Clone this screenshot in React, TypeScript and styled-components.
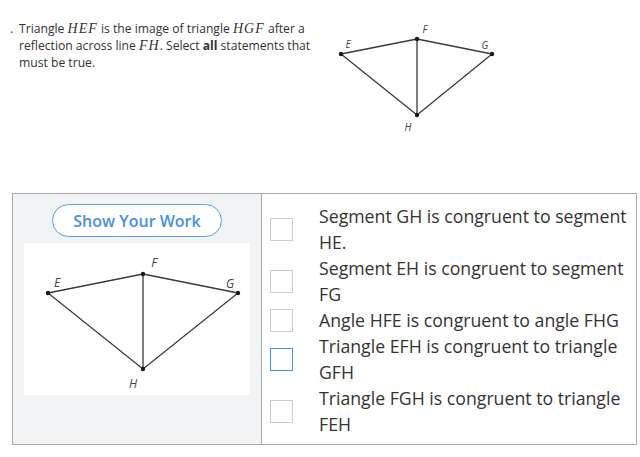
import React from "react";
import styled, { createGlobalStyle } from "styled-components";

const GlobalStyle = createGlobalStyle`
  html, body {
    margin: 0;
    padding: 0;
    background: #ffffff;
  }
  body {
    font-family: "Open Sans", "Liberation Sans", sans-serif;
    color: #333333;
  }
`;

interface Point {
  x: number;
  y: number;
}

interface FigureProps {
  width: number;
  height: number;
  pts: { E: Point; F: Point; G: Point; H: Point };
  labels: { E: Point; F: Point; G: Point; H: Point };
  fontSize: number;
}

const Kite: React.FC<FigureProps> = ({ width, height, pts, labels, fontSize }) => {
  const { E, F, G, H } = pts;
  return (
    <svg width={width} height={height} viewBox={`0 0 ${width} ${height}`}>
      <g stroke="#3a3a3a" strokeWidth={1.3} fill="none">
        <line x1={E.x} y1={E.y} x2={F.x} y2={F.y} />
        <line x1={F.x} y1={F.y} x2={G.x} y2={G.y} />
        <line x1={G.x} y1={G.y} x2={H.x} y2={H.y} />
        <line x1={H.x} y1={H.y} x2={E.x} y2={E.y} />
        <line x1={F.x} y1={F.y} x2={H.x} y2={H.y} />
      </g>
      <g fill="#1a1a1a">
        {[E, F, G, H].map((p, i) => (
          <circle key={i} cx={p.x} cy={p.y} r={2.2} />
        ))}
      </g>
      <g
        fill="#444"
        fontFamily="'Open Sans', 'Liberation Sans', sans-serif"
        fontStyle="italic"
        fontSize={fontSize}
      >
        {(["E", "F", "G", "H"] as const).map((k) => (
          <text key={k} x={labels[k].x} y={labels[k].y} textAnchor="middle">
            {k}
          </text>
        ))}
      </g>
    </svg>
  );
};

const Question = () => (
  <Header>
    <Prompt>
      <Dot>.</Dot>
      <PromptText>
        Triangle <Math>HEF</Math> is the image of triangle <Math>HGF</Math> after a
        reflection across line <Math>FH</Math>. Select <strong>all</strong> statements that
        must be true.
      </PromptText>
    </Prompt>
    <HeaderFigure>
      <Kite
        width={180}
        height={140}
        fontSize={10}
        pts={{
          E: { x: 21, y: 54 },
          F: { x: 97, y: 39 },
          G: { x: 172, y: 54 },
          H: { x: 97, y: 115 },
        }}
        labels={{
          E: { x: 28, y: 48 },
          F: { x: 105, y: 33 },
          G: { x: 165, y: 49 },
          H: { x: 88, y: 131 },
        }}
      />
    </HeaderFigure>
  </Header>
);

const statements = [
  { text: "Segment GH is congruent to segment HE.", focused: false },
  { text: "Segment EH is congruent to segment FG", focused: false },
  { text: "Angle HFE is congruent to angle FHG", focused: false },
  { text: "Triangle EFH is congruent to triangle GFH", focused: true },
  { text: "Triangle FGH is congruent to triangle FEH", focused: false },
];

const App = () => (
  <>
    <GlobalStyle />
    <Page>
      <Question />
      <AnswerBox>
        <WorkPanel>
          <WorkButton type="button">Show Your Work</WorkButton>
          <FigureCard>
            <Kite
              width={226}
              height={152}
              fontSize={12}
              pts={{
                E: { x: 24, y: 50 },
                F: { x: 119, y: 31 },
                G: { x: 214, y: 50 },
                H: { x: 119, y: 126 },
              }}
              labels={{
                E: { x: 33, y: 44 },
                F: { x: 130, y: 24 },
                G: { x: 206, y: 45 },
                H: { x: 109, y: 145 },
              }}
            />
          </FigureCard>
        </WorkPanel>
        <Choices>
          {statements.map((s) => (
            <Choice key={s.text}>
              <Box focused={s.focused} />
              <ChoiceText>{s.text}</ChoiceText>
            </Choice>
          ))}
        </Choices>
      </AnswerBox>
    </Page>
  </>
);

const Page = styled.div`
  width: 640px;
  height: 457px;
  padding-top: 20px;
  box-sizing: border-box;
`;

const Header = styled.div`
  display: flex;
  align-items: flex-start;
  height: 173px;
`;

const Prompt = styled.div`
  display: flex;
  width: 312px;
  padding-left: 10px;
  box-sizing: border-box;
  font-size: 12.15px;
  line-height: 17px;
  color: #333;
`;

const Dot = styled.span`
  width: 9px;
  flex-shrink: 0;
`;

const PromptText = styled.p`
  margin: 0;
  strong {
    font-weight: 700;
  }
`;

const Math = styled.i`
  font-family: "Liberation Serif", "DejaVu Serif", serif;
  font-size: 14px;
  line-height: 1;
  letter-spacing: 1px;
`;

const HeaderFigure = styled.div`
  margin-left: 8px;
  margin-top: -20px;
`;

const AnswerBox = styled.div`
  display: flex;
  margin-left: 12px;
  width: 625px;
  height: 252px;
  border: 1px solid #a9a9a9;
  box-sizing: border-box;
`;

const WorkPanel = styled.div`
  width: 248px;
  flex-shrink: 0;
  background: #f2f3f5;
  border-right: 1px solid #a9a9a9;
  display: flex;
  flex-direction: column;
  align-items: center;
  padding-top: 10px;
`;

const WorkButton = styled.button`
  width: 170px;
  height: 33px;
  border: 1px solid #5b9cf0;
  border-radius: 17px;
  background: #ffffff;
  color: #4a90e2;
  font-family: "Open Sans", "Liberation Sans", sans-serif;
  font-size: 16px;
  font-weight: 600;
  padding: 0;
`;

const FigureCard = styled.div`
  margin-top: 6px;
  width: 226px;
  height: 152px;
  background: #ffffff;
  svg {
    display: block;
  }
`;

const Choices = styled.div`
  flex: 1;
  display: flex;
  flex-direction: column;
  padding: 9px 0 0 8px;
`;

const Choice = styled.div`
  display: flex;
  align-items: center;
`;

const Box = styled.span<{ focused?: boolean }>`
  width: 23px;
  height: 23px;
  box-sizing: border-box;
  flex-shrink: 0;
  border: 1px solid ${(p) => (p.focused ? "#4a90e2" : "#cccccc")};
  background: #ffffff;
  margin-right: 26px;
`;

const ChoiceText = styled.div`
  font-size: 17.7px;
  line-height: 26px;
  color: #333;
  width: 316px;
`;

export default App;
